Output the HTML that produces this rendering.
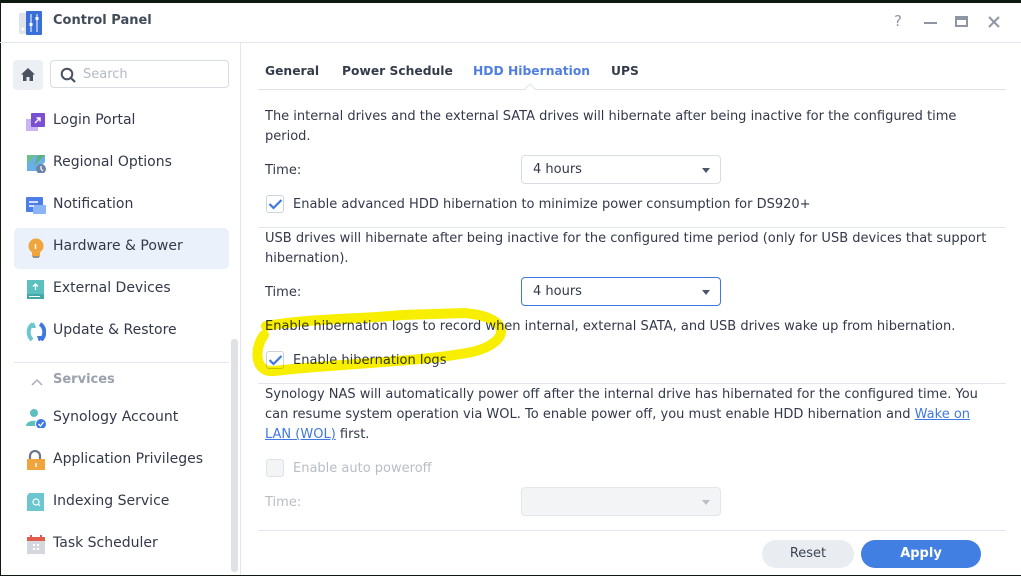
<!DOCTYPE html>
<html><head><meta charset="utf-8"><style>
*{margin:0;padding:0;box-sizing:border-box}
body{width:1021px;height:575px;overflow:hidden;background:#0e1a10;font-family:"DejaVu Sans","Liberation Sans",sans-serif;font-size:13px;color:#33394a;position:relative}
#win{position:absolute;left:1px;top:3px;width:1020px;height:572px;background:#fff}
#in{position:absolute;left:1px;top:2px;width:1020px;height:571px}
.abs{position:absolute}
.t{position:absolute;white-space:nowrap}
.nav{position:absolute;left:52px;font-size:14px;color:#33394a}
.ic{position:absolute;left:25px;width:20px;height:20px}
.sel{position:absolute;border:1px solid #d8dde4;border-radius:4px;height:29px;width:200px;left:519px;background:#fff}
.sel span{position:absolute;left:11px;top:6px}
.sel i{position:absolute;right:10px;top:12px;border-left:4px solid transparent;border-right:4px solid transparent;border-top:5px solid #4d5669}
.cb{position:absolute;left:264px;width:18px;height:18px;border:1px solid #ccd3dd;border-radius:3px;background:#fff}
.tab{position:absolute;white-space:nowrap;font-weight:bold;font-size:12.3px;color:#343c4b;top:59px}
</style></head><body>
<div id="win"><div id="in">
<div class="abs" style="left:17px;top:6px;width:25px;height:25px">
<svg width="25" height="25"><rect x="0" y="2" width="8" height="21" rx="2" fill="#dfe3ea"/><rect x="7" y="0" width="16" height="24" rx="1" fill="#3a6fd8"/><line x1="12" y1="3" x2="12" y2="21" stroke="#fff" stroke-width="1"/><line x1="18" y1="3" x2="18" y2="21" stroke="#fff" stroke-width="1"/><rect x="10.5" y="12" width="3" height="3" fill="#fff"/><rect x="16.5" y="6" width="3" height="3" fill="#fff"/><circle cx="4" cy="18" r="1.5" fill="#fff"/></svg></div>
<div class="t" style="left:51px;top:8px;font-size:13px;font-weight:bold;color:#414b5a">Control Panel</div>
<div class="t" style="left:892px;top:7px;font-size:15px;color:#8f96a3">?</div>
<div class="abs" style="left:922px;top:17px;width:13px;height:2px;background:#8f96a3"></div>
<div class="abs" style="left:953px;top:11px;width:13px;height:11px;border:2px solid #8f96a3;border-top-width:4px"></div>
<svg class="abs" style="left:986px;top:11px" width="12" height="12"><path d="M1 1L11 11M11 1L1 11" stroke="#8f96a3" stroke-width="2"/></svg>
<div class="abs" style="left:-2px;top:37px;width:1022px;height:1px;background:#e3e6ec"></div>
<div class="abs" style="left:238px;top:38px;width:1px;height:532px;background:#e3e6ec"></div>

<div class="abs" style="left:11px;top:55px;width:30px;height:30px;background:#eceff3;border-radius:4px"></div>
<svg class="abs" style="left:18px;top:62px" width="16" height="15"><path d="M8 1L1 7.5H3V14H6.5V10H9.5V14H13V7.5H15Z" fill="#4a5160"/></svg>
<div class="abs" style="left:48px;top:55px;width:179px;height:28px;border:1px solid #d8dde4;border-radius:4px"></div>
<svg class="abs" style="left:58px;top:62px" width="16" height="16"><circle cx="7" cy="7" r="5.3" fill="none" stroke="#4a5160" stroke-width="2"/><path d="M11 11L15 15" stroke="#4a5160" stroke-width="2.2"/></svg>
<div class="t" style="left:81px;top:62px;color:#b3b9c3">Search</div>

<svg class="ic" style="left:24px;top:106px" width="20" height="22"><rect x="0" y="8" width="12" height="12" fill="#c9b5f0"/><rect x="5" y="2" width="14" height="14" rx="1" fill="#7a4fd0"/><path d="M9 12L14 7M10.5 7H14V10.5" stroke="#fff" stroke-width="1.4" fill="none"/></svg>
<div class="nav" style="left:51px;top:107px">Login Portal</div>
<svg class="ic" style="left:24px;top:148px" width="22" height="22"><path d="M1 2H19V9L10 18H1Z" fill="#6ab0e8"/><path d="M1 2H10L1 11Z" fill="#6ac08a"/><path d="M12 2H19L8 13Z" fill="#5db07a"/><circle cx="15" cy="16" r="5" fill="#6d84a8"/><path d="M15 13V16L17 18" stroke="#fff" stroke-width="1.2" fill="none"/></svg>
<div class="nav" style="left:51px;top:149px">Regional Options</div>
<svg class="ic" style="left:24px;top:192px" width="22" height="20"><rect x="0" y="0" width="17" height="15" rx="1" fill="#4d7ee8"/><rect x="7" y="8" width="13" height="9" rx="1" fill="#8ab4f5"/><path d="M3 5H12M3 9H8" stroke="#fff" stroke-width="1.5"/></svg>
<div class="nav" style="left:51px;top:191px">Notification</div>
<div class="abs" style="left:12px;top:223px;width:215px;height:41px;background:#eaf1fb;border-radius:5px"></div>
<svg class="ic" style="left:24px;top:233px" width="20" height="22"><circle cx="10" cy="8" r="7.5" fill="#f0a43c"/><rect x="6" y="13" width="8" height="6" fill="#f0a43c"/><rect x="7" y="18" width="6" height="2" fill="#8a93a3"/><path d="M9.5 6V11" stroke="#fff" stroke-width="1.5"/></svg>
<div class="nav" style="left:51px;top:233px">Hardware &amp; Power</div>
<svg class="ic" style="left:24px;top:275px" width="20" height="20"><rect x="1" y="0" width="17" height="19" fill="#5cc0bf"/><rect x="1" y="14" width="17" height="5" fill="#42a9a8"/><path d="M9.5 10V4M7 6.5L9.5 4L12 6.5" stroke="#fff" stroke-width="1.3" fill="none"/><path d="M3 16.5H14" stroke="#fff" stroke-width="1"/></svg>
<div class="nav" style="left:51px;top:275px">External Devices</div>
<svg class="ic" style="left:24px;top:316px" width="22" height="22"><path d="M7 3C2 6 1 14 6 19" stroke="#6cc6d0" stroke-width="4" fill="none"/><path d="M4 7L8 1L10 7Z" fill="#6cc6d0"/><path d="M14 3C19 6 20 14 15 19" stroke="#3f78e0" stroke-width="4" fill="none"/><path d="M18 15L13 21L11 15Z" fill="#3f78e0"/></svg>
<div class="nav" style="left:51px;top:317px">Update &amp; Restore</div>
<div class="abs" style="left:12px;top:357px;width:215px;height:1px;background:#e3e6ec"></div>
<svg class="abs" style="left:29px;top:373px" width="12" height="8"><path d="M1 7L6 2L11 7" stroke="#a9afba" stroke-width="1.5" fill="none"/></svg>
<div class="t" style="left:51px;top:367px;font-weight:bold;color:#9aa1ad">Services</div>
<div class="abs" style="left:229px;top:334px;width:7px;height:233px;background:#dfe1e5;border-radius:3px"></div>
<svg class="ic" style="left:24px;top:403px" width="22" height="22"><circle cx="8" cy="5" r="4" fill="#5cc0bf"/><path d="M0 18C0 11 16 11 16 18Z" fill="#5cc0bf"/><circle cx="15" cy="16" r="5.5" fill="#3f78e0" stroke="#fff" stroke-width="1"/><path d="M12.5 16L14.5 18L17.5 14" stroke="#fff" stroke-width="1.3" fill="none"/></svg>
<div class="nav" style="left:51px;top:404px">Synology Account</div>
<svg class="ic" style="left:24px;top:445px" width="20" height="22"><path d="M4 10V6A5 5 0 0 1 14 6V10" stroke="#6c7689" stroke-width="2.2" fill="none"/><rect x="1" y="9" width="18" height="12" fill="#f0a43c"/><path d="M10 13V17" stroke="#fff" stroke-width="1.5"/></svg>
<div class="nav" style="left:51px;top:446px">Application Privileges</div>
<svg class="ic" style="left:24px;top:487px" width="20" height="22"><path d="M3 1H18V19H1V4Z" fill="#6cc6d0"/><circle cx="10" cy="10" r="3" fill="none" stroke="#fff" stroke-width="1.2"/><path d="M12 12L14 14" stroke="#fff" stroke-width="1.2"/></svg>
<div class="nav" style="left:51px;top:488px">Indexing Service</div>
<svg class="ic" style="left:24px;top:529px" width="20" height="22"><rect x="1" y="3" width="18" height="17" fill="#d4d8de"/><rect x="1" y="3" width="18" height="4" fill="#e05c4c"/><rect x="4" y="1" width="2" height="4" fill="#e05c4c"/><rect x="14" y="1" width="2" height="4" fill="#e05c4c"/><g fill="#fff"><rect x="7" y="10" width="2" height="2"/><rect x="11" y="10" width="2" height="2"/><rect x="7" y="14" width="2" height="2"/><rect x="11" y="14" width="2" height="2"/></g></svg>
<div class="nav" style="left:51px;top:530px">Task Scheduler</div>

<div class="tab" style="left:263px">General</div>
<div class="tab" style="left:340px">Power Schedule</div>
<div class="tab" style="left:471px;color:#4f7ee0">HDD Hibernation</div>
<div class="tab" style="left:609px">UPS</div>
<div class="abs" style="left:256px;top:84px;width:748px;height:1px;background:#dde2e9"></div>
<div class="abs" style="left:524px;top:80px;width:8px;height:8px;background:#fff;border-left:1px solid #dde2e9;border-top:1px solid #dde2e9;transform:rotate(45deg)"></div>

<div class="t" style="left:263px;top:104px">The internal drives and the external SATA drives will hibernate after being inactive for the configured time</div>
<div class="t" style="left:263px;top:124px">period.</div>
<div class="t" style="left:263px;top:158px">Time:</div>
<div class="sel" style="top:150px"><span>4 hours</span><i></i></div>
<div class="cb" style="top:190px"></div>
<svg class="abs" style="left:266px;top:193px" width="15" height="12"><path d="M1.5 6L5.5 10L13.5 2" stroke="#3f78e0" stroke-width="2.2" fill="none"/></svg>
<div class="t" style="left:291px;top:192px">Enable advanced HDD hibernation to minimize power consumption for DS920+</div>
<div class="abs" style="left:256px;top:222px;width:748px;height:1px;background:#e3e6ec"></div>
<div class="t" style="left:263px;top:226px">USB drives will hibernate after being inactive for the configured time period (only for USB devices that support</div>
<div class="t" style="left:263px;top:246px">hibernation).</div>
<div class="t" style="left:263px;top:280px">Time:</div>
<div class="sel" style="top:272px;border-color:#3f78e0"><span>4 hours</span><i></i></div>
<div class="t" style="left:263px;top:314px">Enable hibernation logs to record when internal, external SATA, and USB drives wake up from hibernation.</div>
<div class="cb" style="top:346px"></div>
<svg class="abs" style="left:266px;top:349px" width="15" height="12"><path d="M1.5 6L5.5 10L13.5 2" stroke="#3f78e0" stroke-width="2.2" fill="none"/></svg>
<div class="t" style="left:291px;top:348px">Enable hibernation logs</div>
<div class="abs" style="left:256px;top:378px;width:748px;height:1px;background:#e3e6ec"></div>
<div class="t" style="left:263px;top:382px">Synology NAS will automatically power off after the internal drive has hibernated for the configured time. You</div>
<div class="t" style="left:263px;top:402px">can resume system operation via WOL. To enable power off, you must enable HDD hibernation and <span style="color:#3f78e0;text-decoration:underline">Wake on</span></div>
<div class="t" style="left:263px;top:422px"><span style="color:#3f78e0;text-decoration:underline">LAN (WOL)</span> first.</div>
<div class="cb" style="top:454px;background:#f3f4f6;border-color:#dfe3e8"></div>
<div class="t" style="left:291px;top:456px;color:#b8bdc6">Enable auto poweroff</div>
<div class="t" style="left:263px;top:490px;color:#b8bdc6">Time:</div>
<div class="sel" style="top:482px;background:#f3f4f6;border-color:#e3e6ea"><i style="border-top-color:#b8bdc6"></i></div>
<div class="abs" style="left:256px;top:525px;width:748px;height:1px;background:#e3e6ec"></div>
<div class="abs" style="left:760px;top:535px;width:92px;height:28px;background:#e9edf2;border-radius:14px;text-align:center;line-height:28px;color:#3c4452">Reset</div>
<div class="abs" style="left:859px;top:535px;width:120px;height:28px;background:#427fe2;border-radius:14px;text-align:center;line-height:28px;color:#fff;font-weight:bold">Apply</div>

<svg class="abs" style="left:0;top:0;mix-blend-mode:multiply" width="1020" height="571"><path d="M264 321C300 314 360 314 400 310L462 308C512 312 508 338 470 347C420 357 330 359 272 366C252 368 252 343 262 330" stroke="#f7ee00" stroke-width="10" fill="none" stroke-linecap="round" stroke-linejoin="round"/></svg>
</div></div>
</body></html>
